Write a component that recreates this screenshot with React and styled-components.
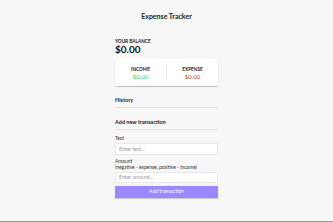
import React from 'react';
import styled, { createGlobalStyle } from 'styled-components';

const GlobalStyle = createGlobalStyle`
  * {
    box-sizing: border-box;
  }
  body {
    margin: 0;
    background-color: #f7f7f7;
    font-family: Lato, 'Open Sans', sans-serif;
    color: #333;
  }
`;

const Page = styled.div`
  height: 222px;
  border-bottom: 1px solid #999;
  overflow: hidden;
`;

const Title = styled.h2`
  margin: 0;
  padding-top: 12px;
  text-align: center;
  font-size: 7px;
  line-height: 8px;
  font-weight: 700;
  color: #222;
`;

const Container = styled.div`
  width: 103px;
  margin: 0 auto;
  padding-top: 18px;
`;

const Caption = styled.h4`
  margin: 0;
  font-size: 4.7px;
  line-height: 6px;
  font-weight: 700;
  text-transform: uppercase;
  color: #222;
`;

const Balance = styled.h1`
  margin: 0;
  font-size: 10px;
  line-height: 11px;
  font-weight: 700;
  color: #111;
`;

const Card = styled.div`
  margin-top: 4px;
  height: 27px;
  background: #fff;
  box-shadow: 0 0.5px 1.5px rgba(0, 0, 0, 0.12), 0 0.5px 1px rgba(0, 0, 0, 0.2);
  display: flex;
  align-items: center;
`;

const Column = styled.div`
  flex: 1;
  height: 17px;
  display: flex;
  flex-direction: column;
  align-items: center;
  justify-content: center;
  gap: 2px;

  & + & {
    border-left: 1px solid #eee;
  }
`;

const Money = styled.p`
  margin: 0;
  font-size: 6px;
  line-height: 6px;
  color: ${props => (props.minus ? '#c0392b' : '#2ecc71')};
`;

const Heading = styled.h3`
  margin: ${props => props.top}px 0 0;
  padding-bottom: 3px;
  border-bottom: 1px solid #e3e3e3;
  font-size: 5.5px;
  line-height: 7px;
  font-weight: 700;
  color: #222;
`;

const Field = styled.div`
  margin-top: ${props => props.top}px;
  display: flex;
  flex-direction: column;
`;

const Label = styled.label`
  font-size: 4.9px;
  line-height: 6px;
  color: #333;
`;

const Input = styled.input`
  display: block;
  margin-top: 2px;
  width: 100%;
  height: 11.5px;
  border: 0.5px solid #e8e8e8;
  border-radius: 1px;
  background: #fff;
  padding: 0 3px;
  font-family: Lato, 'Open Sans', sans-serif;
  font-size: 5.2px;
  outline: none;

  &::placeholder {
    color: #999;
    font-size: 5.2px;
  }
`;

const Button = styled.button`
  display: block;
  margin-top: 3px;
  width: 100%;
  height: 11.5px;
  border: 0;
  border-radius: 0.5px;
  background-color: #9c88ff;
  box-shadow: 0 0.5px 1px rgba(0, 0, 0, 0.2);
  color: #fff;
  font-family: Lato, 'Open Sans', sans-serif;
  font-size: 5px;
  line-height: 11.5px;
  padding: 0;
`;

const App = () => {
  return (
    <Page>
      <GlobalStyle />
      <Title>Expense Tracker</Title>
      <Container>
        <Caption>Your Balance</Caption>
        <Balance>$0.00</Balance>
        <Card>
          <Column>
            <Caption>Income</Caption>
            <Money>$0.00</Money>
          </Column>
          <Column>
            <Caption>Expense</Caption>
            <Money minus>$0.00</Money>
          </Column>
        </Card>
        <Heading top={11}>History</Heading>
        <Heading top={11}>Add new transaction</Heading>
        <Field top={5}>
          <Label>Text</Label>
          <Input type="text" placeholder="Enter text..." />
        </Field>
        <Field top={3}>
          <Label>
            Amount <br />
            (negative - expense, positive - income)
          </Label>
          <Input type="number" placeholder="Enter amount..." />
        </Field>
        <Button>Add transaction</Button>
      </Container>
    </Page>
  );
};

export default App;
